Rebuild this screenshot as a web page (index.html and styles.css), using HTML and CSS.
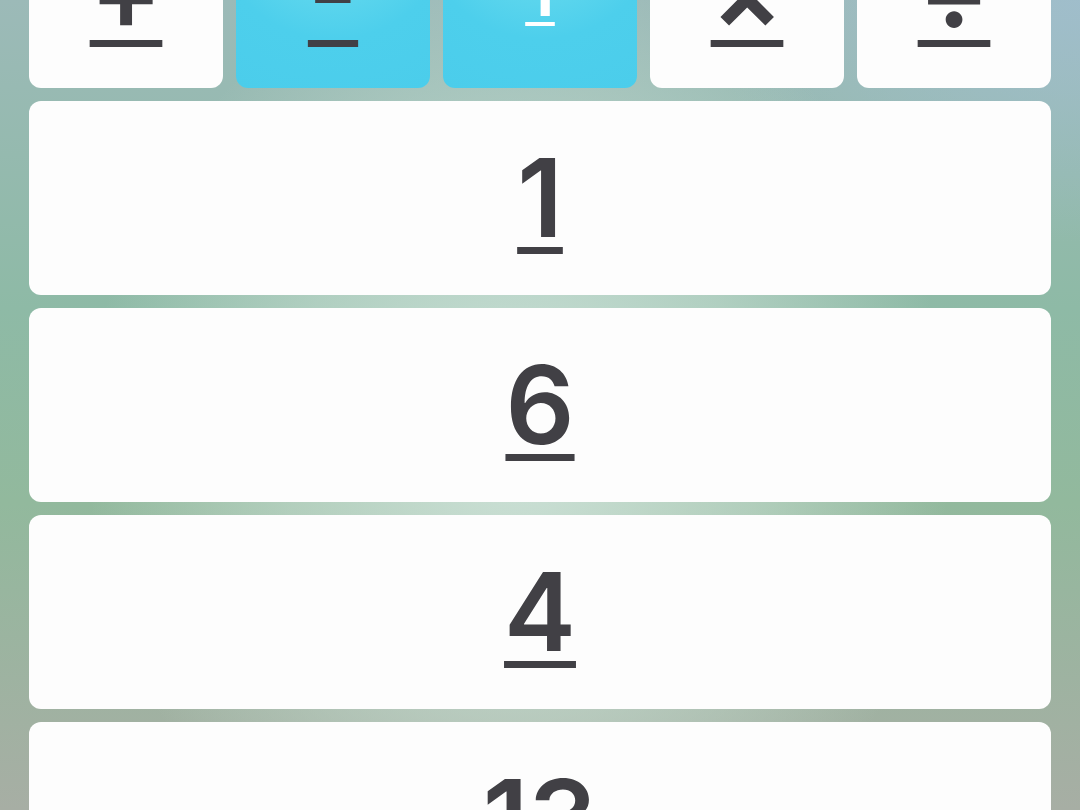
FILE: index.html
```html
<!DOCTYPE html>
<html lang="en">
<head>
<meta charset="utf-8">
<title>Math game</title>
<link rel="stylesheet" href="styles.css">
</head>
<body>
<main class="board">
  <section class="ops">
    <button class="key">+</button>
    <button class="key key-on">-</button>
    <button class="key key-on key-small">1</button>
    <button class="key">×</button>
    <button class="key">÷</button>
  </section>
  <button class="card">1</button>
  <button class="card">6</button>
  <button class="card">4</button>
  <button class="card">13</button>
</main>
</body>
</html>
```

FILE: styles.css
```css
html, body {
  margin: 0;
  padding: 0;
}
body {
  width: 1080px;
  height: 810px;
  overflow: hidden;
  font-family: Inter, "Liberation Sans", sans-serif;
  background:
    radial-gradient(ellipse 40% 60% at 48% 55%, rgba(212, 230, 222, 0.9) 0%, rgba(204, 224, 214, 0.55) 55%, rgba(200, 220, 210, 0) 100%),
    radial-gradient(ellipse 35% 30% at 100% 0%, rgba(160, 190, 205, 0.9) 0%, rgba(160, 190, 205, 0) 100%),
    linear-gradient(180deg, #9cbab8 0%, #8ebaa6 38%, #92b99d 62%, #a7aea4 100%);
}
.board {
  display: flex;
  flex-direction: column;
  gap: 13px;
  padding: 0 29px;
  margin-top: -106px;
}
.ops {
  display: grid;
  grid-template-columns: repeat(5, 1fr);
  gap: 13px;
}
.key, .card {
  border: 0;
  margin: 0;
  padding: 0;
  height: 194px;
  border-radius: 12px;
  background: #fdfdfd;
  color: #414045;
  font-family: Inter, "Liberation Sans", sans-serif;
  font-weight: 600;
  font-size: 108px;
  line-height: 1;
  text-decoration: underline;
  text-decoration-thickness: 7px;
  text-underline-offset: 10px;
  display: flex;
  align-items: center;
  justify-content: center;
}
.key-on {
  background: radial-gradient(circle at 50% 12%, #5dd6ed 0%, #5bd5ed 42%, #4dcfec 62%, #4bcdeb 100%);
}
.key-small {
  color: #ffffff;
  font-size: 70px;
  text-decoration-thickness: 4px;
  text-underline-offset: 6px;
}
```
